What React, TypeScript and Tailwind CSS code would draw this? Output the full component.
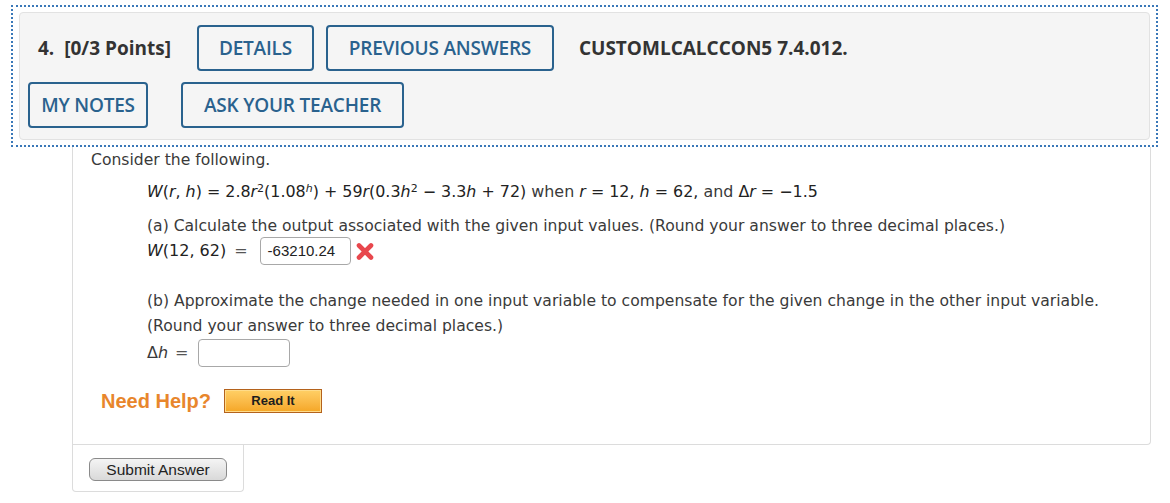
import React from "react";

const headerFont = { fontFamily: '"Open Sans", "Liberation Sans", sans-serif' };
const bodyFont = { fontFamily: '"DejaVu Sans", Verdana, sans-serif' };
const arial = { fontFamily: '"Liberation Sans", Arial, sans-serif' };

function OutlineButton({ label, width }: { label: string; width: string }) {
  return (
    <button
      className={`${width} h-[46px] flex items-center justify-center rounded-[4px] border-2 border-[#2a628e] text-[#2a628e] text-[19px] font-semibold tracking-[-0.2px] bg-transparent`}
      style={headerFont}
    >
      {label}
    </button>
  );
}

function RedX() {
  return (
    <svg width="20" height="19" viewBox="0 0 20 19" className="ml-[4px]">
      <path
        d="M4 3.5 L16 15.5 M16 3.5 L4 15.5"
        stroke="#e8474d"
        strokeWidth="4.6"
        strokeLinecap="round"
        fill="none"
      />
    </svg>
  );
}

export default function App() {
  return (
    <div className="w-[1170px] h-[503px] bg-white overflow-hidden">
      {/* question header */}
      <div className="ml-[11px] mt-[5px] w-[1147px] border-2 border-dotted border-[#3a78b8] px-[6px] py-[5px]">
        <div className="rounded-[4px] border border-[#e2e2e2] bg-[#f5f5f5] pt-[12px] pb-[11px]">
          <div className="flex items-center pl-[18px]">
            <span className="text-[19px] font-bold text-[#333] mr-[26px]" style={headerFont}>
              4.&nbsp; [0/3 Points]
            </span>
            <OutlineButton label="DETAILS" width="w-[117px]" />
            <div className="w-[12px]" />
            <OutlineButton label="PREVIOUS ANSWERS" width="w-[228px]" />
            <span className="ml-[25px] text-[19px] font-bold text-[#333]" style={headerFont}>
              CUSTOMLCALCCON5 7.4.012.
            </span>
          </div>
          <div className="flex items-center pl-[8px] mt-[11px]">
            <OutlineButton label="MY NOTES" width="w-[120px]" />
            <div className="w-[33px]" />
            <OutlineButton label="ASK YOUR TEACHER" width="w-[223px]" />
          </div>
        </div>
      </div>

      {/* question body */}
      <div className="ml-[72px] w-[1079px] border-x border-b border-[#dcdcdc] rounded-br-[4px] pl-[18px] pt-[2px] pb-[31px] text-[15.6px] text-[#3a3a3a]" style={bodyFont}>
        <p className="leading-[22px]">Consider the following.</p>
        <div className="ml-[56px]">
          <p className="leading-[22px] mt-[10px] text-[#222] text-[15.9px]">
            <i>W</i>(<i>r</i>, <i>h</i>) = 2.8<i>r</i>
            <sup className="text-[11px]">2</sup>(1.08<sup className="text-[11px]"><i>h</i></sup>) + 59<i>r</i>(0.3<i>h</i>
            <sup className="text-[11px]">2</sup> − 3.3<i>h</i> + 72) <span className="text-[#3a3a3a]">when</span> <i>r</i> = 12, <i>h</i> = 62,{" "}
            <span className="text-[#3a3a3a]">and</span> Δ<i>r</i> = −1.5
          </p>
          <p className="leading-[22px] mt-[12px]">
            (a) Calculate the output associated with the given input values. (Round your answer to three decimal places.)
          </p>
          <div className="flex items-center h-[28px] text-[#222] text-[16px]">
            <span>
              <i>W</i>(12, 62)
            </span>
            <span className="ml-[8px] text-[#555]">=</span>
            <div
              className="ml-[12px] w-[91px] h-[28px] rounded-[4px] border border-[#a8a8a8] flex items-center pl-[7px] text-[15px] text-[#222]"
              style={arial}
            >
              -63210.24
            </div>
            <RedX />
          </div>
          <p className="leading-[25px] mt-[24px]">
            (b) Approximate the change needed in one input variable to compensate for the given change in the other input variable.
          </p>
          <p className="leading-[25px]">(Round your answer to three decimal places.)</p>
          <div className="flex items-center h-[28px] text-[16px]">
            <span>
              Δ<i>h</i>
            </span>
            <span className="ml-[7px] text-[#555]">=</span>
            <div className="ml-[9px] w-[92px] h-[28px] rounded-[4px] border border-[#a8a8a8] bg-white" />
          </div>
        </div>
        <div className="flex items-center mt-[22px] ml-[10px]">
          <span className="text-[20px] font-bold text-[#e8862c] leading-[24px]" style={arial}>
            Need Help?
          </span>
          <button
            className="ml-[13px] w-[98px] h-[24px] border border-[#b4621c] bg-gradient-to-b from-[#ffd066] to-[#f5a623] shadow-[inset_0_0_0_1px_#ffdc8a] text-[13px] font-bold text-[#1d1d1d]"
            style={arial}
          >
            Read It
          </button>
        </div>
      </div>

      {/* submit */}
      <div className="ml-[72px] w-[172px] h-[47px] border-x border-b border-[#dcdcdc] rounded-b-[4px] pl-[16px] pt-[12px]">
        <button
          className="w-[138px] h-[23px] rounded-[6px] border border-[#8a8a8a] bg-gradient-to-b from-[#f4f4f4] to-[#d9d9d9] text-[15.5px] text-[#222] leading-none"
          style={arial}
        >
          Submit Answer
        </button>
      </div>
    </div>
  );
}
